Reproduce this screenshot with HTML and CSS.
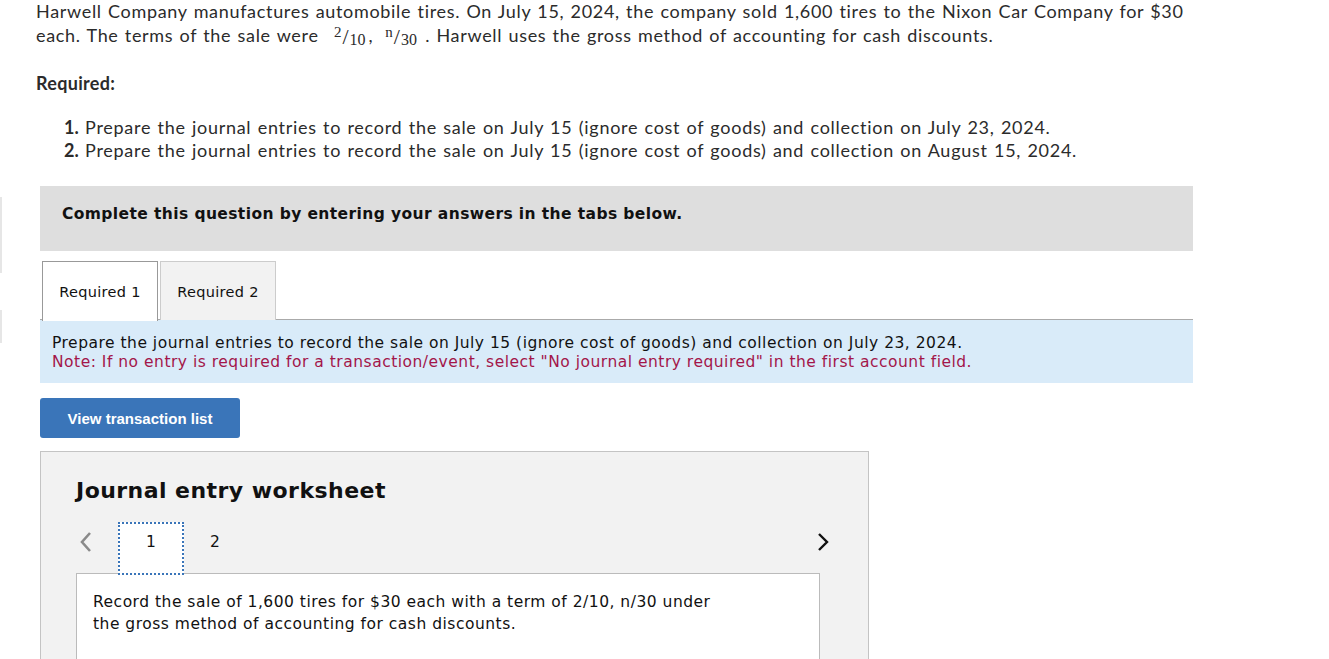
FILE: index.html
```html
<!DOCTYPE html>
<html>
<head>
<meta charset="utf-8">
<link rel="stylesheet" href="styles.css">
</head>
<body>
<div class="edge edge-a"></div>
<div class="edge edge-b"></div>
<main class="page">
  <p class="intro"><span class="line">Harwell Company manufactures automobile tires. On July 15, 2024, the company sold 1,600 tires to the Nixon Car Company for $30</span><span class="line">each. The terms of the sale were <span class="frac"><span class="num">2</span><span class="slash">/</span><span class="den">10</span></span><span class="comma">,</span><span class="frac"><span class="num">n</span><span class="slash">/</span><span class="den">30</span></span> . Harwell uses the gross method of accounting for cash discounts.</span></p>
  <h3 class="req-title">Required:</h3>
  <ol class="req-list">
    <li><b>1.</b> Prepare the journal entries to record the sale on July 15 (ignore cost of goods) and collection on July 23, 2024.</li>
    <li><b>2.</b> Prepare the journal entries to record the sale on July 15 (ignore cost of goods) and collection on August 15, 2024.</li>
  </ol>
  <div class="complete-box">Complete this question by entering your answers in the tabs below.</div>
  <div class="tabs">
    <div class="tab active">Required 1</div>
    <div class="tab">Required 2</div>
  </div>
  <div class="instr">
    <div>Prepare the journal entries to record the sale on July 15 (ignore cost of goods) and collection on July 23, 2024.</div>
    <div class="note">Note: If no entry is required for a transaction/event, select "No journal entry required" in the first account field.</div>
  </div>
  <button class="btn">View transaction list</button>
  <section class="worksheet">
    <h2 class="ws-title">Journal entry worksheet</h2>
    <div class="ws-nav">
      <span class="arrow left"><svg width="14" height="22" viewBox="0 0 14 22"><path d="M11 2 L3 11 L11 20" fill="none" stroke="#8a8a8a" stroke-width="2.6"/></svg></span>
      <span class="page-num current">1</span>
      <span class="page-num">2</span>
      <span class="spacer"></span>
      <span class="arrow right"><svg width="14" height="22" viewBox="0 0 14 22"><path d="M3 3 L11 11 L3 19" fill="none" stroke="#111" stroke-width="2.4"/></svg></span>
    </div>
    <div class="ws-content">Record the sale of 1,600 tires for $30 each with a term of 2/10, n/30 under<br>the gross method of accounting for cash discounts.</div>
  </section>
</main>
</body>
</html>
```
FILE: styles.css
```css
html, body {
  margin: 0;
  padding: 0;
  background: #fff;
}
body {
  font-family: "Lato", "Liberation Sans", sans-serif;
  color: #2b2b2b;
  overflow: hidden;
  height: 659px;
}
.edge {
  position: absolute;
  left: 0;
  width: 2px;
  background: #e6e6e6;
}
.edge-a { top: 197px; height: 76px; }
.edge-b { top: 310px; height: 33px; }
.page {
  padding: 0 0 0 36px;
  width: 1157px;
}
.intro {
  margin: -1px 0 0 0;
  font-size: 18px;
  line-height: 24px;
  letter-spacing: 0.68px;
  word-spacing: 1px;
  width: 1170px;
}
.intro .line {
  display: block;
  white-space: nowrap;
}
.frac {
  font-family: "Liberation Serif", serif;
  margin: 0 2px 0 9px;
  letter-spacing: 0;
  white-space: nowrap;
}
.frac .num {
  display: inline-block;
  font-size: 15px;
  line-height: 14px;
  vertical-align: 5px;
  margin-right: 1px;
}
.frac .slash {
  display: inline-block;
  font-size: 22px;
  line-height: 18px;
  vertical-align: -2px;
  margin: 0 1px 0 0;
}
.frac .den {
  display: inline-block;
  font-size: 16px;
  line-height: 14px;
  vertical-align: -3px;
}
.comma { margin: 0 3px 0 1px; }
.req-title {
  margin: 23px 0 0 0;
  font-size: 18px;
  line-height: 24px;
  font-weight: 700;
  letter-spacing: 0.3px;
}
.req-list {
  list-style: none;
  margin: 21px 0 0 0;
  padding: 0 0 0 28px;
  font-size: 18px;
  line-height: 23px;
  letter-spacing: 0.72px;
  word-spacing: 1px;
}
.req-list b { font-weight: 700; letter-spacing: 0; }
.complete-box {
  margin: 24px 0 0 4px;
  height: 65px;
  box-sizing: border-box;
  background: #dedede;
  padding: 19px 0 0 22px;
  font-family: "DejaVu Sans", Verdana, sans-serif;
  font-weight: 700;
  font-size: 15.5px;
  letter-spacing: 0.4px;
  color: #111;
  width: 1153px;
}
.tabs {
  margin: 10px 0 0 4px;
  width: 1153px;
  display: flex;
  gap: 2px;
  padding-left: 2px;
  box-sizing: border-box;
  border-bottom: 1px solid #aaa;
  height: 59px;
}
.tab {
  width: 116px;
  height: 59px;
  box-sizing: border-box;
  border: 1px solid #ccc;
  border-bottom: none;
  background: #f2f2f2;
  font-family: "DejaVu Sans", Verdana, sans-serif;
  font-size: 14.5px;
  letter-spacing: 0.3px;
  color: #111;
  display: flex;
  align-items: center;
  justify-content: center;
  padding-top: 1px;
}
.tab.active {
  background: #fff;
  border-color: #999;
  height: 60px;
  margin-bottom: -1px;
}
.instr {
  margin: 0 0 0 4px;
  width: 1153px;
  height: 63px;
  box-sizing: border-box;
  background: #d9ebf9;
  padding: 14px 0 0 12px;
  font-family: "DejaVu Sans", Verdana, sans-serif;
  font-size: 15.5px;
  letter-spacing: 0.5px;
  line-height: 19px;
  color: #111;
}
.instr .note { color: #a3164a; }
.btn {
  display: block;
  margin: 15px 0 0 4px;
  width: 200px;
  height: 40px;
  border: none;
  border-radius: 3px;
  background: #3a75b9;
  color: #fff;
  font-family: "Liberation Sans", Arial, sans-serif;
  font-weight: 700;
  font-size: 15px;
  padding: 0;
}
.worksheet {
  margin: 13px 0 0 4px;
  width: 829px;
  height: 230px;
  box-sizing: border-box;
  background: #f2f2f2;
  border: 1px solid #c4c4c4;
  padding: 24px 0 0 35px;
}
.ws-title {
  margin: 0;
  font-family: "DejaVu Sans", Verdana, sans-serif;
  font-weight: 700;
  font-size: 22px;
  letter-spacing: 0.45px;
  line-height: 30px;
  color: #111;
}
.ws-nav {
  margin-top: 16px;
  display: flex;
  align-items: flex-start;
  width: 754px;
  height: 53px;
  font-family: "DejaVu Sans", Verdana, sans-serif;
  font-size: 15.5px;
  color: #111;
}
.arrow {
  display: flex;
  align-items: center;
  height: 40px;
}
.arrow.left { margin-left: 3px; width: 39px; }
.page-num {
  width: 66px;
  height: 53px;
  box-sizing: border-box;
  display: flex;
  justify-content: center;
  padding-top: 11px;
}
.page-num.current {
  background: #fff;
  border: 2px dotted #3a75b9;
  position: relative;
  z-index: 1;
  padding-top: 9px;
}
.page-num:not(.current) { width: 28px; margin-left: 26px; justify-content: flex-start; }
.spacer { flex: 1; }
.arrow.right { width: 14px; }
.ws-content {
  margin-top: -2px;
  width: 744px;
  height: 100px;
  box-sizing: border-box;
  background: #fff;
  border: 1px solid #bbb;
  padding: 17px 0 0 16px;
  font-family: "DejaVu Sans", Verdana, sans-serif;
  font-size: 15.5px;
  letter-spacing: 0.5px;
  line-height: 22px;
  color: #111;
}
```
